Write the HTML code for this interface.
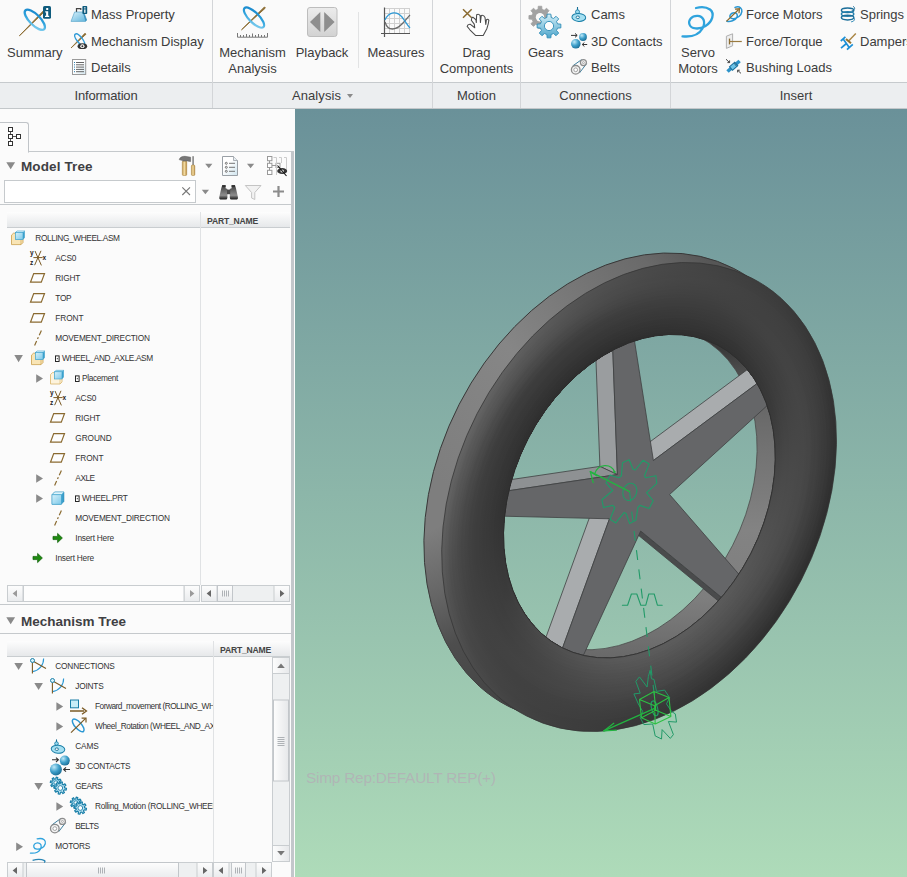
<!DOCTYPE html>
<html><head><meta charset="utf-8">
<style>
html,body{margin:0;padding:0;}
body{width:907px;height:877px;overflow:hidden;position:relative;background:#fafafa;font-family:"Liberation Sans",sans-serif;color:#3a3a3a;}
.abs{position:absolute;}
.t{position:absolute;white-space:nowrap;line-height:1;}
#ribbon{position:absolute;left:0;top:0;width:907px;height:82px;background:#fafafa;}
#rlabels{position:absolute;left:0;top:82px;width:907px;height:27px;background:#eceef0;border-top:1px solid #c6cacd;border-bottom:1px solid #c3c7ca;box-sizing:border-box;}
.rt{position:absolute;white-space:nowrap;font-size:13px;line-height:16px;color:#3c3c3c;}
.rl{position:absolute;white-space:nowrap;font-size:13px;line-height:16px;color:#3c3c3c;top:88px;text-align:center;}
.vsep{position:absolute;width:1px;background:#d2d4d6;}
#left{position:absolute;left:0;top:109px;width:295px;height:768px;background:#fbfbfb;}
.row{position:absolute;white-space:nowrap;font-size:8.3px;line-height:12px;color:#333;letter-spacing:-0.12px;}
.hd{position:absolute;white-space:nowrap;letter-spacing:0.12px;font-size:13.5px;font-weight:bold;color:#3f4043;line-height:16px;}
.col{position:absolute;white-space:nowrap;font-size:8.6px;font-weight:bold;color:#444;line-height:12px;letter-spacing:-0.2px;}
</style></head><body>

<!-- RIBBON -->
<div id="ribbon"></div>
<div id="rlabels"></div>
<!-- group separators -->
<div class="vsep" style="left:212px;top:0;height:108px;background:#d3d5d8"></div>
<div class="vsep" style="left:432px;top:0;height:108px;background:#d3d5d8"></div>
<div class="vsep" style="left:520px;top:0;height:108px;background:#d3d5d8"></div>
<div class="vsep" style="left:670px;top:0;height:108px;background:#d3d5d8"></div>
<div class="vsep" style="left:358px;top:12px;height:56px;background:#e2e3e4"></div>

<!-- big button labels -->
<div class="rt" style="left:7px;top:45px;">Summary</div>
<div class="rt" style="left:91px;top:7px;">Mass Property</div>
<div class="rt" style="left:91px;top:34px;">Mechanism Display</div>
<div class="rt" style="left:91px;top:60px;">Details</div>
<div class="rt" style="left:212px;top:45px;width:81px;text-align:center">Mechanism<br>Analysis</div>
<div class="rt" style="left:282px;top:45px;width:80px;text-align:center">Playback</div>
<div class="rt" style="left:356px;top:45px;width:80px;text-align:center">Measures</div>
<div class="rt" style="left:432px;top:45px;width:89px;text-align:center">Drag<br>Components</div>
<div class="rt" style="left:528px;top:45px;">Gears</div>
<div class="rt" style="left:591px;top:7px;">Cams</div>
<div class="rt" style="left:591px;top:34px;">3D Contacts</div>
<div class="rt" style="left:591px;top:60px;">Belts</div>
<div class="rt" style="left:668px;top:45px;width:60px;text-align:center">Servo<br>Motors</div>
<div class="rt" style="left:746px;top:7px;">Force Motors</div>
<div class="rt" style="left:746px;top:34px;">Force/Torque</div>
<div class="rt" style="left:746px;top:60px;">Bushing Loads</div>
<div class="rt" style="left:860px;top:7px;">Springs</div>
<div class="rt" style="left:860px;top:34px;">Dampers</div>

<!-- group labels -->
<div class="rl" style="left:0;width:212px;letter-spacing:-0.2px">Information</div>
<div class="rl" style="left:213px;width:219px;letter-spacing:0.1px">Analysis<span style="display:inline-block;width:0;height:0;border-left:3.6px solid transparent;border-right:3.6px solid transparent;border-top:4.4px solid #8a8a8a;margin-left:6px;position:relative;top:-2px"></span></div>
<div class="rl" style="left:432px;width:89px;">Motion</div>
<div class="rl" style="left:521px;width:149px;">Connections</div>
<div class="rl" style="left:671px;width:250px;">Insert</div>
<!--ICONS-START-->
<svg class="abs" style="left:0;top:0" width="907" height="82" viewBox="0 0 907 82">
<defs>
<linearGradient id="ring" x1="0" y1="0" x2="1" y2="1"><stop offset="0" stop-color="#1583c9"/><stop offset="0.5" stop-color="#2fa3dd"/><stop offset="1" stop-color="#8fd6f2"/></linearGradient>
<linearGradient id="gblue" x1="0" y1="0" x2="0" y2="1"><stop offset="0" stop-color="#d4eff8"/><stop offset="1" stop-color="#4fa6cb"/></linearGradient>
<radialGradient id="sph" cx="0.35" cy="0.3" r="0.8"><stop offset="0" stop-color="#bfe9f8"/><stop offset="0.5" stop-color="#3d9fca"/><stop offset="1" stop-color="#16658c"/></radialGradient>
<linearGradient id="pbk" x1="0" y1="0" x2="0" y2="1"><stop offset="0" stop-color="#ececec"/><stop offset="1" stop-color="#d2d2d2"/></linearGradient>
<linearGradient id="wgt" x1="0" y1="0" x2="1" y2="1"><stop offset="0" stop-color="#d8f0fa"/><stop offset="1" stop-color="#5fb4dc"/></linearGradient>
<linearGradient id="sheet" x1="0" y1="0" x2="1" y2="1"><stop offset="0.5" stop-color="#ffffff"/><stop offset="1" stop-color="#cfe4ee"/></linearGradient>
</defs>

<!-- Summary -->
<g>
<path d="M19.4 35.8 L44.6 9.6 L45.6 10.6 Z" fill="#8a6a2f" stroke="#8a6a2f" stroke-width="0.9" stroke-linejoin="round"/>
<ellipse cx="34.8" cy="19.8" rx="13.3" ry="5.3" transform="rotate(45 34.8 19.8)" fill="none" stroke="url(#ring)" stroke-width="2.3"/>
<path d="M30 24.6 L44.6 9.6 L45.6 10.6 Z" fill="#8a6a2f" stroke="#8a6a2f" stroke-width="0.9" stroke-linejoin="round" clip-path="none" opacity="0"/>
<rect x="43" y="6" width="8" height="12.8" rx="1.6" fill="#0f5b7d"/>
<rect x="46.2" y="8" width="2" height="2" fill="#fff"/><path d="M45.2 11.2h3v4.6h1v1.2h-4.2v-1.2h1.1v-3.4h-0.9z" fill="#fff"/>
</g>

<!-- Mass Property -->
<g>
<path d="M76.5 12 V8.6 H80.8 V10" fill="none" stroke="#444" stroke-width="1.2"/>
<path d="M74.6 12 L83.7 12 L86.7 20 L85.5 21.4 L71 21.4 Z" fill="url(#wgt)" stroke="#4a9cc4" stroke-width="0.6"/>
<path d="M83.7 12 L86.7 20 L85.5 21.4 L82.8 12.4Z" fill="#3f93bf"/>
<rect x="82.4" y="6" width="4.8" height="8" rx="0.8" fill="#0f5b7d"/>
<rect x="84.2" y="7.2" width="1.3" height="1.3" fill="#fff"/><rect x="84.2" y="9.4" width="1.3" height="3.4" fill="#fff"/>
</g>

<!-- Mechanism Display -->
<g>
<path d="M71 48 L85 33.2 L86 34.2 Z" fill="#8a6a2f" stroke="#8a6a2f" stroke-width="0.8" stroke-linejoin="round"/>
<ellipse cx="79.6" cy="39.6" rx="7" ry="2.7" transform="rotate(52 79.6 39.6)" fill="none" stroke="#2f9ad6" stroke-width="1.4"/>
<ellipse cx="82.4" cy="46.2" rx="4.8" ry="2.9" fill="#333"/>
<ellipse cx="82.4" cy="46.2" rx="2.1" ry="1.9" fill="#fff"/>
<circle cx="82.4" cy="46.2" r="1" fill="#333"/>
</g>

<!-- Details -->
<g>
<rect x="72.5" y="59.5" width="13.2" height="15" fill="url(#sheet)" stroke="#9a9a9a" stroke-width="1"/>
<g stroke="#555" stroke-width="0.9"><path d="M76 62.5H84M76 64.8H84M76 67.1H84M76 69.4H84M76 71.7H84"/></g>
<g fill="#2a7fb0"><rect x="74" y="62" width="1" height="1"/><rect x="74" y="64.3" width="1" height="1"/><rect x="74" y="66.6" width="1" height="1"/><rect x="74" y="68.9" width="1" height="1"/><rect x="74" y="71.2" width="1" height="1"/></g>
</g>

<!-- Mechanism Analysis -->
<g>
<path d="M241.5 29.8 L264.4 7 L265.4 8 Z" fill="#8a6a2f" stroke="#8a6a2f" stroke-width="0.9" stroke-linejoin="round"/>
<ellipse cx="254" cy="17.6" rx="13.4" ry="5" transform="rotate(45 254 17.6)" fill="none" stroke="url(#ring)" stroke-width="2.2"/>
<g stroke="#777" stroke-width="1" fill="none"><path d="M237.5 33V37.2H267.5V33M240.5 35V37M243.5 35V37M246.5 34V37M249.5 35V37M252.5 33.5V37M255.5 35V37M258.5 34V37M261.5 35V37M264.5 35V37"/></g>
</g>

<!-- Playback -->
<g>
<rect x="307.5" y="7.5" width="29.5" height="29" rx="2.5" fill="url(#pbk)" stroke="#bdbdbd"/>
<path d="M310 22 L320.3 12 V32Z" fill="#8e8e8e"/>
<path d="M334.6 22 L324.2 12 V32Z" fill="#8e8e8e"/>
</g>

<!-- Measures -->
<g>
<g stroke="#d0d0d0" stroke-width="1"><path d="M389.5 8V33M394.5 8V33M399.5 8V33M404.5 8V33M409.5 8V33M385 8.5H410M385 13.5H410M385 18.5H410M385 23.5H410M385 28.5H410"/></g>
<path d="M384.5 7.5V37M381 33.5H410" stroke="#555" stroke-width="1.2" fill="none"/>
<path d="M385 22 C388 32 396 30 402 24 C405 21 408 17 410 15" fill="none" stroke="#6a6a6a" stroke-width="1.3"/>
<path d="M385 20 C389 11 397 11 402 17 C405 21 407 25 410 28" fill="none" stroke="#2f9ad6" stroke-width="1.3"/>
</g>

<!-- Drag -->
<g>
<path d="M463 9.2L471.7 17.7M471.7 9.2L463 17.7" stroke="#8a6a2f" stroke-width="1.5" fill="none"/>
<path d="M471.93 17.44 L471.32 20.27 L474.24 24.11 L474.75 27.71 L470.39 24.37 Q467.57 24.11 467.16 26.42 L469.88 29.76 L475.52 35.40 L483.22 35.40 L486.81 28.73 Q488.61 23.60 488.86 20.27 Q488.09 18.73 486.40 19.75 L485.79 24.37 L485.02 17.44 Q483.73 14.62 481.27 15.39 L480.40 22.58 L480.14 15.65 Q478.60 13.44 476.65 14.78 L476.29 22.58 L475.93 19.75 L472.86 17.19 Z" fill="#fff" stroke="#4a4a4a" stroke-width="1.05" stroke-linejoin="round"/>
</g>

<!-- Gears -->
<g>
<path d="M547.96 15.32 L551.06 15.55 L551.06 19.05 L547.96 19.28 L547.03 21.53 L549.06 23.88 L546.58 26.36 L544.23 24.33 L541.98 25.26 L541.75 28.36 L538.25 28.36 L538.02 25.26 L535.77 24.33 L533.42 26.36 L530.94 23.88 L532.97 21.53 L532.04 19.28 L528.94 19.05 L528.94 15.55 L532.04 15.32 L532.97 13.07 L530.94 10.72 L533.42 8.24 L535.77 10.27 L538.02 9.34 L538.25 6.24 L541.75 6.24 L541.98 9.34 L544.23 10.27 L546.58 8.24 L549.06 10.72 L547.03 13.07Z" fill="#a2a2a2" stroke="#a2a2a2" stroke-width="0.8" stroke-linejoin="round"/>
<circle cx="540" cy="17.3" r="4.2" fill="#fafafa"/>
<path d="M557.54 23.88 L560.85 24.12 L560.85 27.88 L557.54 28.12 L556.54 30.54 L558.71 33.05 L556.05 35.71 L553.54 33.54 L551.12 34.54 L550.88 37.85 L547.12 37.85 L546.88 34.54 L544.46 33.54 L541.95 35.71 L539.29 33.05 L541.46 30.54 L540.46 28.12 L537.15 27.88 L537.15 24.12 L540.46 23.88 L541.46 21.46 L539.29 18.95 L541.95 16.29 L544.46 18.46 L546.88 17.46 L547.12 14.15 L550.88 14.15 L551.12 17.46 L553.54 18.46 L556.05 16.29 L558.71 18.95 L556.54 21.46Z" fill="url(#gblue)" stroke="#2f8db8" stroke-width="0.9" stroke-linejoin="round"/>
<circle cx="549" cy="26" r="4.6" fill="#fdfdfd" stroke="#2f8db8" stroke-width="0.9"/>
</g>

<!-- Cams -->
<g>
<path d="M577.5 7V11" stroke="#1a6f95" stroke-width="1.1"/>
<circle cx="577.5" cy="11.8" r="2" fill="#9ddcf0" stroke="#1a7fa8" stroke-width="0.9"/>
<ellipse cx="578.8" cy="17.4" rx="6.9" ry="4" transform="rotate(4 578.8 17.4)" fill="#a5e0f2" stroke="#1a7fa8" stroke-width="1"/>
<ellipse cx="577.8" cy="17.3" rx="1.7" ry="1.3" fill="#fafafa" stroke="#1a6f95" stroke-width="0.9"/>
</g>

<!-- 3D Contacts -->
<g>
<circle cx="583" cy="37" r="3.9" fill="url(#sph)"/>
<circle cx="575.8" cy="43.8" r="4.8" fill="url(#sph)"/>
<path d="M571 35.4H577M575 33.4L577.2 35.4L575 37.4" stroke="#333" stroke-width="1" fill="none"/>
<path d="M587.2 44.5H582.4M584.4 42.5L582.2 44.5L584.4 46.5" stroke="#333" stroke-width="1" fill="none"/>
</g>

<!-- Belts -->
<g>
<path d="M572.6 66 L581.6 59.6 M579.4 73 L586.6 63.6" stroke="#3d7f9f" stroke-width="1" fill="none"/>
<circle cx="575.7" cy="69.8" r="4.3" fill="#f4f4f4" stroke="#8c8c8c" stroke-width="1.3"/>
<circle cx="575.7" cy="69.8" r="1.9" fill="#fff" stroke="#9a9a9a" stroke-width="0.9"/>
<circle cx="583.4" cy="62.6" r="3" fill="#f4f4f4" stroke="#8c8c8c" stroke-width="1.2"/>
<circle cx="583.4" cy="62.6" r="1" fill="#fff" stroke="#9a9a9a" stroke-width="0.8"/>
</g>
<!--MORE-ICONS-->
<!-- Servo -->
<g fill="none" stroke="#2fa3dd" stroke-width="2.3" stroke-linecap="round">
<path d="M682.5 36.3 C691 37.2 698.5 35.5 702.5 28.5 C706 22 703.5 16 697.5 15.8 C691.5 15.6 688 20 689.5 24.5 C691 29 699 30 705.5 26 C712.5 21.5 715 13.5 710 9.5 C706.5 7 700.5 6.8 696 8" />
</g>

<!-- Force Motors -->
<g fill="none">
<path d="M727 21.3 C730.5 22 735 20.5 736.8 17.5 C738.2 15 736.8 12.6 734 12.8 C731 13 729 15.5 730.2 17.4 C731.5 19.5 736 19 739 16.5 C742.5 13.5 742.6 9.5 740.5 7.8 C739 6.6 736.5 6.8 735 7.4" stroke="#2a97d3" stroke-width="1.5" stroke-linecap="round"/>
<path d="M726.4 21.4 L738.4 9.8" stroke="#8a6a2f" stroke-width="1.3"/>
<path d="M735 9.2 L739.4 8.8 L739 13.2" stroke="#8a6a2f" stroke-width="1.3" stroke-linejoin="miter"/>
</g>

<!-- Force/Torque -->
<g>
<path d="M726.4 36.2 L732.6 33.8 L732.6 45.8 L726.4 48.4 Z" fill="#ededed" stroke="#a8a8a8" stroke-width="0.9"/>
<path d="M729.5 38.6V44.4" stroke="#8a6a2f" stroke-width="1.3"/>
<path d="M729.5 41.5 H741.8" stroke="#9a7a3f" stroke-width="1.2"/>
</g>

<!-- Bushing Loads -->
<g>
<path d="M727.5 71.5 L739.6 61" stroke="#2d93c9" stroke-width="3.6" stroke-linecap="butt"/>
<path d="M730.6 68.8 L736.6 63.6" stroke="#1b6f9c" stroke-width="5.6"/>
<path d="M731.4 68.1 L735.8 64.3" stroke="#6cc3e8" stroke-width="3.6"/>
<path d="M734.2 63.2 L736.4 66.2" stroke="#1d4f68" stroke-width="0.8"/>
<path d="M726 59.2 L729.4 62.4 M727.4 62.6 H729.6 V60.4" stroke="#333" stroke-width="0.9" fill="none"/>
<path d="M741 73.4 L737.8 70.4 M739.8 70.2 H737.6 V72.4" stroke="#333" stroke-width="0.9" fill="none"/>
</g>

<!-- Springs -->
<g fill="none" stroke-linecap="round">
<path d="M853.5 6.5 C855.5 8 855 10 852 10.8" stroke="#1d6f9a" stroke-width="1"/>
<ellipse cx="847.6" cy="10.3" rx="6.2" ry="2.3" stroke="#1d6f9a" stroke-width="1.5"/>
<ellipse cx="847.6" cy="14" rx="6.2" ry="2.3" stroke="#2580ad" stroke-width="1.5"/>
<ellipse cx="847.6" cy="17.6" rx="6.2" ry="2.3" stroke="#1d6f9a" stroke-width="1.5"/>
<path d="M854 18 C855.5 19.5 854 21.5 851.5 21.8" stroke="#2d88b5" stroke-width="1"/>
</g>

<!-- Dampers -->
<g fill="none">
<path d="M845.4 36.8 L840.8 41 M843.2 38.9 L849.2 47.4 M846.4 43.5 L841 48.2 M847 49.6 L852.8 44.4 M849.2 47.4 L847 49.6" stroke="#1b8fd6" stroke-width="1.7"/>
<path d="M855.8 33.4 L848.6 41" stroke="#a98544" stroke-width="1.4"/>
<path d="M846 39 L851 43.2" stroke="#94722f" stroke-width="2"/>
</g>
</svg>


<!-- LEFT PANEL -->
<div id="left"></div>
<div class="abs" style="left:0;top:151px;width:294px;height:1px;background:#c5c9cc"></div>
<div class="abs" style="left:-1px;top:122px;width:28px;height:29px;border:1px solid #c0c4c8;border-bottom:1px solid #fbfbfb;border-radius:0 3px 0 0;background:#fbfbfb;box-sizing:content-box"></div>
<div class="abs" style="left:291px;top:152px;width:3px;height:725px;background:#c3c7cb"></div>
<svg class="abs" style="left:0;top:120px" width="30" height="32" viewBox="0 120 30 32"><g fill="#fff" stroke="#333" stroke-width="1"><path d="M10.5 131.5V134.5M10.5 138.5V141.5M12.5 136.5H16.5" fill="none" stroke="#555"/><rect x="8.5" y="127.5" width="4" height="4"/><rect x="8.5" y="134.5" width="4" height="4"/><rect x="8.5" y="141.5" width="4" height="4"/><rect x="16.5" y="134.5" width="4" height="4"/></g></svg>
<div class="hd" style="left:21px;top:158.6px;">Model Tree</div>
<div class="hd" style="left:21px;top:613.6px;letter-spacing:0">Mechanism Tree</div>
<div class="abs" style="left:0;top:204px;width:291px;height:1px;background:#c5c9cc"></div>
<div class="abs" style="left:0;top:604px;width:291px;height:1px;background:#c5c9cc"></div>
<div class="abs" style="left:0;top:633px;width:291px;height:1px;background:#c5c9cc"></div>
<div class="abs" style="left:4px;top:180px;width:192px;height:23px;border:1px solid #c6cacd;background:#fff;box-sizing:border-box"></div>
<div class="abs" style="left:7px;top:212px;width:283px;height:16px;background:linear-gradient(#fdfdfd,#e6e8ea);border-bottom:1px solid #c9cdd0;box-sizing:border-box"></div>
<div class="abs" style="left:200px;top:212px;width:1px;height:373px;background:#e0e2e4"></div>
<div class="col" style="left:207px;top:215px;">PART_NAME</div>
<div class="abs" style="left:7px;top:641px;width:283px;height:16px;background:linear-gradient(#fdfdfd,#e6e8ea);border-bottom:1px solid #c9cdd0;box-sizing:border-box"></div>
<div class="abs" style="left:213px;top:641px;width:1px;height:221px;background:#e0e2e4"></div>
<div class="col" style="left:220px;top:644px;">PART_NAME</div>
<div class="row" style="left:35.3px;top:232.0px;letter-spacing:-0.385px;">ROLLING_WHEEL.ASM</div>
<div class="row" style="left:55.3px;top:252.0px;letter-spacing:-0.222px;">ACS0</div>
<div class="row" style="left:55.3px;top:272.0px;letter-spacing:-0.202px;">RIGHT</div>
<div class="row" style="left:55.3px;top:292.0px;letter-spacing:-0.335px;">TOP</div>
<div class="row" style="left:55.3px;top:312.0px;letter-spacing:-0.096px;">FRONT</div>
<div class="row" style="left:55.3px;top:332.0px;letter-spacing:-0.210px;">MOVEMENT_DIRECTION</div>
<div class="row" style="left:62.1px;top:352.0px;letter-spacing:-0.398px;">WHEEL_AND_AXLE.ASM</div>
<div class="row" style="left:82.1px;top:372.0px;letter-spacing:-0.389px;">Placement</div>
<div class="row" style="left:75.3px;top:392.0px;letter-spacing:-0.222px;">ACS0</div>
<div class="row" style="left:75.3px;top:412.0px;letter-spacing:-0.202px;">RIGHT</div>
<div class="row" style="left:75.3px;top:432.0px;letter-spacing:-0.096px;">GROUND</div>
<div class="row" style="left:75.3px;top:452.0px;letter-spacing:-0.096px;">FRONT</div>
<div class="row" style="left:75.3px;top:472.0px;letter-spacing:-0.455px;">AXLE</div>
<div class="row" style="left:82.1px;top:492.0px;letter-spacing:-0.330px;">WHEEL.PRT</div>
<div class="row" style="left:75.3px;top:512.0px;letter-spacing:-0.210px;">MOVEMENT_DIRECTION</div>
<div class="row" style="left:75.3px;top:532.0px;letter-spacing:-0.222px;">Insert Here</div>
<div class="row" style="left:55.3px;top:552.0px;letter-spacing:-0.222px;">Insert Here</div>
<div class="row" style="left:55.2px;top:660.0px;letter-spacing:-0.165px;">CONNECTIONS</div>
<div class="row" style="left:75.2px;top:680.0px;letter-spacing:-0.186px;">JOINTS</div>
<div class="row" style="left:95.0px;top:700.0px;letter-spacing:-0.511px;width:117.5px;overflow:hidden;">Forward_movement (ROLLING_WHEEL</div>
<div class="row" style="left:95.0px;top:720.0px;letter-spacing:-0.415px;width:117.5px;overflow:hidden;">Wheel_Rotation (WHEEL_AND_AXLE</div>
<div class="row" style="left:75.2px;top:740.0px;letter-spacing:-0.146px;">CAMS</div>
<div class="row" style="left:75.2px;top:760.0px;letter-spacing:-0.249px;">3D CONTACTS</div>
<div class="row" style="left:75.2px;top:780.0px;letter-spacing:-0.332px;">GEARS</div>
<div class="row" style="left:95.0px;top:800.0px;letter-spacing:-0.296px;width:117.5px;overflow:hidden;">Rolling_Motion (ROLLING_WHEEL</div>
<div class="row" style="left:75.2px;top:820.0px;letter-spacing:-0.454px;">BELTS</div>
<div class="row" style="left:55.2px;top:840.0px;letter-spacing:-0.211px;">MOTORS</div>
<svg class="abs" style="left:0;top:109px" width="295" height="768" viewBox="0 109 295 768">
<defs>
<linearGradient id="lblue" x1="0" y1="0" x2="1" y2="1"><stop offset="0" stop-color="#d6f1fb"/><stop offset="1" stop-color="#7cc8e8"/></linearGradient>
<linearGradient id="ham" x1="0" y1="0" x2="1" y2="0"><stop offset="0" stop-color="#c9a25a"/><stop offset="0.5" stop-color="#f0d9a0"/><stop offset="1" stop-color="#b8883a"/></linearGradient>
<linearGradient id="sheetL" x1="0" y1="0" x2="1" y2="1"><stop offset="0.4" stop-color="#ffffff"/><stop offset="1" stop-color="#cfe4ee"/></linearGradient>
<linearGradient id="sbt" x1="0" y1="0" x2="0" y2="1"><stop offset="0" stop-color="#fdfdfd"/><stop offset="1" stop-color="#e9ebed"/></linearGradient>
<linearGradient id="sbtv" x1="0" y1="0" x2="1" y2="0"><stop offset="0" stop-color="#fdfdfd"/><stop offset="1" stop-color="#e6e8ea"/></linearGradient>
<radialGradient id="sph2" cx="0.35" cy="0.3" r="0.8"><stop offset="0" stop-color="#bfe9f8"/><stop offset="0.5" stop-color="#3d9fca"/><stop offset="1" stop-color="#16658c"/></radialGradient>
<linearGradient id="bino" x1="0" y1="0" x2="0" y2="1"><stop offset="0" stop-color="#3a3a3a"/><stop offset="0.35" stop-color="#666"/><stop offset="0.7" stop-color="#8e8e8e"/><stop offset="0.88" stop-color="#444"/><stop offset="1" stop-color="#1a1a1a"/></linearGradient>
</defs>
<path d="M6.3 162.3 h8.8 l-4.4 7.0z" fill="#8a8a8a"/>
<path d="M6.3 617.2 h8.8 l-4.4 7.0z" fill="#8a8a8a"/>
<g>
<rect x="182.3" y="161" width="4.4" height="14.5" rx="1" fill="url(#ham)" stroke="#a07a30" stroke-width="0.5"/>
<path d="M179.2 159.6 C180 156.8 183 156 186 156.4 L190.6 157.2 V161.6 L187.4 161 H183 C181.5 160 180.2 160.2 179.2 159.6Z" fill="#777" stroke="#555" stroke-width="0.5"/>
<rect x="192.3" y="156.2" width="1.6" height="9" fill="#888"/>
<rect x="191.4" y="165" width="3.4" height="10.5" rx="1" fill="url(#ham)" stroke="#a07a30" stroke-width="0.5"/>
</g>
<path d="M205.2 163.8 h7.2 l-3.6 4.4z" fill="#8a8a8a"/>
<g>
<path d="M222.5 156.5 H233.5 L237.5 160.5 V175.5 H222.5Z" fill="url(#sheetL)" stroke="#9aa0a6" stroke-width="1"/>
<path d="M233.5 156.5 V160.5 H237.5" fill="#e8eef2" stroke="#9aa0a6" stroke-width="0.8"/>
<g stroke="#666" stroke-width="0.9" fill="none"><circle cx="226.3" cy="163.3" r="1"/><circle cx="226.3" cy="167.3" r="1"/><circle cx="226.3" cy="171.3" r="1"/><path d="M229 163.3H235M229 167.3H235M229 171.3H235"/></g>
</g>
<path d="M247.0 163.8 h7.2 l-3.6 4.4z" fill="#8a8a8a"/>
<g>
<g fill="#fff" stroke="#999" stroke-width="1"><path d="M269.5 161V175M272 165.5H276" fill="none"/><rect x="267.5" y="156.5" width="4.4" height="4.2"/><rect x="267.5" y="163.3" width="4.4" height="4.2"/><rect x="267.5" y="170.3" width="4.4" height="4.2"/><rect x="276" y="163.3" width="4" height="4.2"/></g>
<path d="M273.5 157.5H276.5V175M279 157.5H281.5V163M284 157.5H286.5V170" fill="none" stroke="#ccc" stroke-width="1"/>
<ellipse cx="282.2" cy="171" rx="5" ry="3" fill="#333"/><ellipse cx="282.2" cy="171" rx="1.8" ry="1.6" fill="#ddd"/>
<path d="M277.5 165.5L286.5 176" stroke="#111" stroke-width="1.1"/>
</g>
<path d="M182.3 187.3L190 195M190 187.3L182.3 195" stroke="#777" stroke-width="1.1"/>
<path d="M201.8 189.8 h7.2 l-3.6 4.4z" fill="#8a8a8a"/>
<g>
<path d="M222.2 185.3 H225.6 V188.2 L227.4 189 V197.4 Q227.4 199.6 225.6 199.6 H221.4 Q218.8 199.6 219.3 197 L221.2 188.4 Z" fill="url(#bino)"/>
<path d="M235 185.3 H231.6 V188.2 L229.8 189 V197.4 Q229.8 199.6 231.6 199.6 H235.8 Q238.4 199.6 237.9 197 L236 188.4 Z" fill="url(#bino)"/>
<rect x="227" y="189.6" width="3.2" height="4.6" fill="#4a4a4a"/>
<path d="M222.2 185.3h3.4v1.5h-3.4zM231.6 185.3h3.4v1.5h-3.4z" fill="#2a2a2a"/>
</g>
<path d="M245.3 185.5H261 L254.8 192.5 V199.5 L251.6 198 V192.5Z" fill="#f2f2f2" stroke="#c4c4c4" stroke-width="1" stroke-linejoin="round"/>
<path d="M278.5 186V197M273 191.5H284" stroke="#8c8c8c" stroke-width="2.2"/>
<g transform="translate(11 230.6)">
<path d="M0.5 4.5 L2.5 2.6 H12 V12 L10 14 H0.5Z" fill="#f9e5b5" stroke="#c9a04c" stroke-width="0.8"/>
<path d="M10 14V4.5" stroke="#c9a04c" stroke-width="0.6" fill="none"/>
<path d="M4.5 1.8 L6.3 0.3 H13.8 V7.2 L12 9 H4.5Z" fill="#3ba0cc"/>
<path d="M4.5 1.8 L6.3 0.3 H13.8 L12 1.8Z" fill="#d8f2fb" stroke="#3ba0cc" stroke-width="0.5"/>
<rect x="4.5" y="1.8" width="7.5" height="7.2" fill="url(#lblue)" stroke="#3ba0cc" stroke-width="0.6"/>
</g>
<g transform="translate(30 250)">
<path d="M5 1 L11.4 15.4 M11 0.8 L4.6 15.2 M3.4 7.6 H12.6" stroke="#7a5a25" stroke-width="1" fill="none"/>
<g font-family="Liberation Sans,sans-serif" font-size="6.5" font-weight="bold" fill="#222"><text x="0" y="5.2">y</text><text x="12.6" y="9.6">x</text><text x="0" y="15">z</text></g>
</g>
<path d="M33.7 273.6 H44.5 L41.3 282.20000000000005 H30.5Z" fill="#fdfdfd" stroke="#8a6a30" stroke-width="1.2" stroke-linejoin="miter"/>
<path d="M33.7 293.6 H44.5 L41.3 302.20000000000005 H30.5Z" fill="#fdfdfd" stroke="#8a6a30" stroke-width="1.2" stroke-linejoin="miter"/>
<path d="M33.7 313.6 H44.5 L41.3 322.20000000000005 H30.5Z" fill="#fdfdfd" stroke="#8a6a30" stroke-width="1.2" stroke-linejoin="miter"/>
<path d="M41.4 330.5 L34.6 345.5" stroke="#8a6a30" stroke-width="1.2" stroke-dasharray="5.2 2.2 2 2.2" fill="none"/>
<g transform="translate(31 350.6)">
<path d="M0.5 4.5 L2.5 2.6 H12 V12 L10 14 H0.5Z" fill="#f9e5b5" stroke="#c9a04c" stroke-width="0.8"/>
<path d="M10 14V4.5" stroke="#c9a04c" stroke-width="0.6" fill="none"/>
<path d="M4.5 1.8 L6.3 0.3 H13.8 V7.2 L12 9 H4.5Z" fill="#3ba0cc"/>
<path d="M4.5 1.8 L6.3 0.3 H13.8 L12 1.8Z" fill="#d8f2fb" stroke="#3ba0cc" stroke-width="0.5"/>
<rect x="4.5" y="1.8" width="7.5" height="7.2" fill="url(#lblue)" stroke="#3ba0cc" stroke-width="0.6"/>
</g>
<rect x="55.5" y="355.90000000000003" width="3.6" height="5.6" fill="#fff" stroke="#111" stroke-width="0.9"/><rect x="56.8" y="358.20000000000005" width="1" height="1" fill="#111"/>
<g transform="translate(50 370)">
<path d="M0.5 4.5 L2.5 2.6 H12 V12 L10 14 H0.5Z" fill="#fdf3dc" stroke="#d9b56a" stroke-width="0.8"/>
<path d="M10 14V4.5" stroke="#d9b56a" stroke-width="0.6" fill="none"/>
<path d="M4.5 1.8 L6.3 0.3 H13.8 V7.2 L12 9 H4.5Z" fill="#3ba0cc"/>
<path d="M4.5 1.8 L6.3 0.3 H13.8 L12 1.8Z" fill="#d8f2fb" stroke="#3ba0cc" stroke-width="0.5"/>
<rect x="4.5" y="1.8" width="7.5" height="7.2" fill="url(#lblue)" stroke="#3ba0cc" stroke-width="0.6"/>
</g>
<rect x="75.5" y="375.90000000000003" width="3.6" height="5.6" fill="#fff" stroke="#111" stroke-width="0.9"/><rect x="76.8" y="378.20000000000005" width="1" height="1" fill="#111"/>
<g transform="translate(50 390)">
<path d="M5 1 L11.4 15.4 M11 0.8 L4.6 15.2 M3.4 7.6 H12.6" stroke="#7a5a25" stroke-width="1" fill="none"/>
<g font-family="Liberation Sans,sans-serif" font-size="6.5" font-weight="bold" fill="#222"><text x="0" y="5.2">y</text><text x="12.6" y="9.6">x</text><text x="0" y="15">z</text></g>
</g>
<path d="M53.7 413.6 H64.5 L61.3 422.20000000000005 H50.5Z" fill="#fdfdfd" stroke="#8a6a30" stroke-width="1.2" stroke-linejoin="miter"/>
<path d="M53.7 433.6 H64.5 L61.3 442.20000000000005 H50.5Z" fill="#fdfdfd" stroke="#8a6a30" stroke-width="1.2" stroke-linejoin="miter"/>
<path d="M53.7 453.6 H64.5 L61.3 462.20000000000005 H50.5Z" fill="#fdfdfd" stroke="#8a6a30" stroke-width="1.2" stroke-linejoin="miter"/>
<path d="M61.4 470.5 L54.6 485.5" stroke="#8a6a30" stroke-width="1.2" stroke-dasharray="5.2 2.2 2 2.2" fill="none"/>
<g transform="translate(51 491)">
<path d="M1 3.8 L3.6 1 H13 V10.4 L10.4 13.2 H1Z" fill="#3ba0cc" stroke="#2a86b0" stroke-width="0.5"/>
<path d="M1 3.8 L3.6 1 H13 L10.4 3.8Z" fill="#dff4fb" stroke="#3ba0cc" stroke-width="0.5"/>
<rect x="1" y="3.8" width="9.4" height="9.4" fill="url(#lblue)" stroke="#3ba0cc" stroke-width="0.6"/>
</g>
<rect x="75.5" y="495.90000000000003" width="3.6" height="5.6" fill="#fff" stroke="#111" stroke-width="0.9"/><rect x="76.8" y="498.20000000000005" width="1" height="1" fill="#111"/>
<path d="M61.4 510.5 L54.6 525.5" stroke="#8a6a30" stroke-width="1.2" stroke-dasharray="5.2 2.2 2 2.2" fill="none"/>
<path d="M53 536.4 H57.6 V533.4 L62.4 538 L57.6 542.6 V539.6 H53Z" fill="#1e8a10" stroke="#0d5c06" stroke-width="0.7" stroke-linejoin="round"/>
<path d="M33 556.4 H37.6 V553.4 L42.4 558 L37.6 562.6 V559.6 H33Z" fill="#1e8a10" stroke="#0d5c06" stroke-width="0.7" stroke-linejoin="round"/>
<path d="M14.3 355.0 h8.6 l-4.3 7.2z" fill="#8a8a8a"/>
<path d="M36.2 374.2 v8.6 l6.8 -4.3z" fill="#8a8a8a"/>
<path d="M36.2 474.2 v8.6 l6.8 -4.3z" fill="#8a8a8a"/>
<path d="M36.2 494.2 v8.6 l6.8 -4.3z" fill="#8a8a8a"/>
<rect x="7.5" y="585.5" width="192" height="16" fill="#eef0f1" stroke="#c9cdd0" stroke-width="1"/><rect x="7.5" y="585.5" width="15.5" height="16" fill="url(#sbt)" stroke="#c9cdd0"/><rect x="184" y="585.5" width="15.5" height="16" fill="url(#sbt)" stroke="#c9cdd0"/><path d="M17 589.9 V597.1 L12.6 593.5Z" fill="#9a9a9a"/><path d="M190 589.9 V597.1 L194.4 593.5Z" fill="#9a9a9a"/>
<rect x="23.5" y="585.5" width="160.5" height="16" fill="#fdfdfd" stroke="#c9cdd0"/>
<rect x="201.5" y="585.5" width="88" height="16" fill="#eef0f1" stroke="#c9cdd0" stroke-width="1"/><rect x="201.5" y="585.5" width="15.5" height="16" fill="url(#sbt)" stroke="#c9cdd0"/><rect x="274" y="585.5" width="15.5" height="16" fill="url(#sbt)" stroke="#c9cdd0"/><path d="M211 589.9 V597.1 L206.6 593.5Z" fill="#666"/><path d="M280 589.9 V597.1 L284.4 593.5Z" fill="#666"/><rect x="217.5" y="585.5" width="15" height="16" fill="url(#sbt)" stroke="#c2c6ca"/><path d="M222.5 590.5v6M224.5 590.5v6M226.5 590.5v6M228.5 590.5v6" stroke="#aeb2b6" stroke-width="1"/>
<rect x="7.5" y="862.5" width="205" height="16" fill="#eef0f1" stroke="#c9cdd0" stroke-width="1"/><rect x="7.5" y="862.5" width="15.5" height="16" fill="url(#sbt)" stroke="#c9cdd0"/><rect x="197" y="862.5" width="15.5" height="16" fill="url(#sbt)" stroke="#c9cdd0"/><path d="M17 866.9 V874.1 L12.6 870.5Z" fill="#666"/><path d="M203 866.9 V874.1 L207.4 870.5Z" fill="#666"/><rect x="26.5" y="862.5" width="152" height="16" fill="url(#sbt)" stroke="#c2c6ca"/><path d="M98.5 867.5v6M100.5 867.5v6M102.5 867.5v6M104.5 867.5v6" stroke="#aeb2b6" stroke-width="1"/>
<rect x="213.5" y="862.5" width="58" height="16" fill="#eef0f1" stroke="#c9cdd0" stroke-width="1"/><rect x="213.5" y="862.5" width="15.5" height="16" fill="url(#sbt)" stroke="#c9cdd0"/><rect x="256" y="862.5" width="15.5" height="16" fill="url(#sbt)" stroke="#c9cdd0"/><path d="M223 866.9 V874.1 L218.6 870.5Z" fill="#666"/><path d="M262 866.9 V874.1 L266.4 870.5Z" fill="#666"/><rect x="231.5" y="862.5" width="14" height="16" fill="url(#sbt)" stroke="#c2c6ca"/><path d="M235.5 867.5v6M237.5 867.5v6M239.5 867.5v6M241.5 867.5v6" stroke="#aeb2b6" stroke-width="1"/>
<rect x="272.5" y="657.5" width="17" height="204" fill="#eef0f1" stroke="#c9cdd0"/>
<rect x="272.5" y="657.5" width="17" height="16" fill="url(#sbtv)" stroke="#c9cdd0"/>
<rect x="272.5" y="845.5" width="17" height="16" fill="url(#sbtv)" stroke="#c9cdd0"/>
<path d="M277.2 668 H284.8 L281 663.4Z" fill="#777"/>
<path d="M277.2 851 H284.8 L281 855.6Z" fill="#777"/>
<rect x="273.5" y="700" width="15" height="81" fill="url(#sbtv)" stroke="#c2c6ca"/>
<path d="M277.5 737.5h7M277.5 739.5h7M277.5 741.5h7M277.5 743.5h7M277.5 745.5h7" stroke="#aeb2b6" stroke-width="1"/>
<g transform="translate(30 658)" fill="none">
<path d="M13.6 0.4 C13.8 7 9 12.6 2.6 13.6" stroke="#2a97d3" stroke-width="1.1"/>
<path d="M2.4 4.4 V15.6 M3.6 3.4 L16 10.4" stroke="#7a5a25" stroke-width="1.1"/>
<circle cx="2.5" cy="2.5" r="2" fill="#d8f2fb" stroke="#1a7fa8" stroke-width="1"/>
</g>
<g transform="translate(50 678)" fill="none">
<path d="M13.6 0.4 C13.8 7 9 12.6 2.6 13.6" stroke="#2a97d3" stroke-width="1.1"/>
<path d="M2.4 4.4 V15.6 M3.6 3.4 L16 10.4" stroke="#7a5a25" stroke-width="1.1"/>
<circle cx="2.5" cy="2.5" r="2" fill="#d8f2fb" stroke="#1a7fa8" stroke-width="1"/>
</g>
<path d="M14.3 662.9 h8.6 l-4.3 7.2z" fill="#8a8a8a"/>
<path d="M34.3 682.9 h8.6 l-4.3 7.2z" fill="#8a8a8a"/>
<path d="M34.3 782.9 h8.6 l-4.3 7.2z" fill="#8a8a8a"/>
<path d="M56.4 702.2 v8.6 l6.8 -4.3z" fill="#8a8a8a"/>
<path d="M56.4 722.2 v8.6 l6.8 -4.3z" fill="#8a8a8a"/>
<path d="M56.4 802.2 v8.6 l6.8 -4.3z" fill="#8a8a8a"/>
<path d="M16.2 842.5 v8.6 l6.8 -4.3z" fill="#8a8a8a"/>
<rect x="70.5" y="700" width="8" height="7.8" fill="#c8eef8" stroke="#1a7fa8" stroke-width="1"/><path d="M70 711 H84" stroke="#7a5a25" stroke-width="1.5"/><path d="M82 707.8 L86.4 711 L82 714.2" stroke="#7a5a25" stroke-width="1.4" fill="none"/>
<ellipse cx="78.2" cy="725.4" rx="8" ry="3.3" transform="rotate(48 78.2 725.4)" fill="none" stroke="#2a97d3" stroke-width="1.5"/><path d="M71 732.6 L85.6 718.4" stroke="#7a5a25" stroke-width="1.2"/><path d="M81.6 718.2 H86 V722.6" stroke="#7a5a25" stroke-width="1.2" fill="none"/>
<g><path d="M56.5 739.4V743" stroke="#1a6f95" stroke-width="1.1"/><circle cx="56.5" cy="743.6" r="1.8" fill="#9ddcf0" stroke="#1a7fa8" stroke-width="0.9"/>
<ellipse cx="58" cy="749.2" rx="6.8" ry="4" transform="rotate(5 58 749.2)" fill="#a5e0f2" stroke="#1a7fa8" stroke-width="1"/><ellipse cx="56.8" cy="749.2" rx="1.7" ry="1.3" fill="#fafafa" stroke="#1a6f95" stroke-width="0.9"/></g>
<g><circle cx="64.8" cy="760.6" r="5" fill="url(#sph2)"/><circle cx="55.9" cy="769.5" r="6" fill="url(#sph2)"/>
<path d="M52 759.8H58M56 757.6L58.4 759.8L56 762" stroke="#333" stroke-width="1.1" fill="none"/><path d="M70 769.5H64M66 767.3L63.6 769.5L66 771.7" stroke="#333" stroke-width="1.1" fill="none"/></g>
<g><path d="M59.70 782.69 L61.49 783.08 L61.16 784.72 L59.36 784.38 L58.66 785.41 L59.65 786.96 L58.27 787.88 L57.23 786.36 L56.01 786.60 L55.62 788.39 L53.98 788.06 L54.32 786.26 L53.29 785.56 L51.74 786.55 L50.82 785.17 L52.34 784.13 L52.10 782.91 L50.31 782.52 L50.64 780.88 L52.44 781.22 L53.14 780.19 L52.15 778.64 L53.53 777.72 L54.57 779.24 L55.79 779.00 L56.18 777.21 L57.82 777.54 L57.48 779.34 L58.51 780.04 L60.06 779.05 L60.98 780.43 L59.46 781.47Z" fill="#a9dcf0" stroke="#1a7fa8" stroke-width="1.2" stroke-linejoin="round"/><circle cx="55.9" cy="782.8" r="2" fill="#fff" stroke="#1a7fa8" stroke-width="0.9"/>
<path d="M64.60 787.88 L66.49 788.31 L66.13 790.12 L64.21 789.78 L63.42 790.95 L64.46 792.60 L62.92 793.62 L61.81 792.03 L60.42 792.30 L59.99 794.19 L58.18 793.83 L58.52 791.91 L57.35 791.12 L55.70 792.16 L54.68 790.62 L56.27 789.51 L56.00 788.12 L54.11 787.69 L54.47 785.88 L56.39 786.22 L57.18 785.05 L56.14 783.40 L57.68 782.38 L58.79 783.97 L60.18 783.70 L60.61 781.81 L62.42 782.17 L62.08 784.09 L63.25 784.88 L64.90 783.84 L65.92 785.38 L64.33 786.49Z" fill="#c4e8f6" stroke="#1a7fa8" stroke-width="1.2" stroke-linejoin="round"/><circle cx="60.3" cy="788.0" r="2.4" fill="#fff" stroke="#1a7fa8" stroke-width="0.9"/></g>
<g><path d="M79.70 802.69 L81.49 803.08 L81.16 804.72 L79.36 804.38 L78.66 805.41 L79.65 806.96 L78.27 807.88 L77.23 806.36 L76.01 806.60 L75.62 808.39 L73.98 808.06 L74.32 806.26 L73.29 805.56 L71.74 806.55 L70.82 805.17 L72.34 804.13 L72.10 802.91 L70.31 802.52 L70.64 800.88 L72.44 801.22 L73.14 800.19 L72.15 798.64 L73.53 797.72 L74.57 799.24 L75.79 799.00 L76.18 797.21 L77.82 797.54 L77.48 799.34 L78.51 800.04 L80.06 799.05 L80.98 800.43 L79.46 801.47Z" fill="#a9dcf0" stroke="#1a7fa8" stroke-width="1.2" stroke-linejoin="round"/><circle cx="75.9" cy="802.8" r="2" fill="#fff" stroke="#1a7fa8" stroke-width="0.9"/>
<path d="M84.60 807.88 L86.49 808.31 L86.13 810.12 L84.21 809.78 L83.42 810.95 L84.46 812.60 L82.92 813.62 L81.81 812.03 L80.42 812.30 L79.99 814.19 L78.18 813.83 L78.52 811.91 L77.35 811.12 L75.70 812.16 L74.68 810.62 L76.27 809.51 L76.00 808.12 L74.11 807.69 L74.47 805.88 L76.39 806.22 L77.18 805.05 L76.14 803.40 L77.68 802.38 L78.79 803.97 L80.18 803.70 L80.61 801.81 L82.42 802.17 L82.08 804.09 L83.25 804.88 L84.90 803.84 L85.92 805.38 L84.33 806.49Z" fill="#c4e8f6" stroke="#1a7fa8" stroke-width="1.2" stroke-linejoin="round"/><circle cx="80.30000000000001" cy="808.0" r="2.4" fill="#fff" stroke="#1a7fa8" stroke-width="0.9"/></g>
<g><path d="M51.8 825 L60.6 818.6 M58.6 831.8 L65.6 822.6" stroke="#3d7f9f" stroke-width="1" fill="none"/>
<circle cx="54.8" cy="828.6" r="4.3" fill="#f4f4f4" stroke="#8c8c8c" stroke-width="1.3"/><circle cx="54.8" cy="828.6" r="1.9" fill="#fff" stroke="#9a9a9a" stroke-width="0.9"/>
<circle cx="62.4" cy="821.4" r="3" fill="#f4f4f4" stroke="#8c8c8c" stroke-width="1.2"/><circle cx="62.4" cy="821.4" r="1" fill="#fff" stroke="#9a9a9a" stroke-width="0.8"/></g>
<g transform="translate(30.4 835.2) scale(0.5) translate(-682.5 -0.5)" fill="none" stroke="#2fa3dd" stroke-width="2.6" stroke-linecap="round"><path d="M682.5 36.3 C691 37.2 698.5 35.5 702.5 28.5 C706 22 703.5 16 697.5 15.8 C691.5 15.6 688 20 689.5 24.5 C691 29 699 30 705.5 26 C712.5 21.5 715 13.5 710 9.5 C706.5 7 700.5 6.8 696 8"/></g>
<path d="M32.6 860.4 C36 859.4 41 859 44.6 860.6 C45.4 861 45 862 44 862.4" stroke="#2a86b5" stroke-width="1.2" fill="none"/>
</svg>


<!-- VIEWPORT -->
<svg class="abs" style="left:291px;top:108px" width="616" height="769" viewBox="291 108 616 769">
<defs>
<linearGradient id="bg" x1="0" y1="0" x2="0" y2="1">
<stop offset="0" stop-color="#6a9199"/><stop offset="1" stop-color="#aedbb9"/>
</linearGradient>
</defs>
<rect x="295" y="109" width="612" height="768" fill="url(#bg)"/>
<defs>
<linearGradient id="rg0" gradientUnits="userSpaceOnUse" x1="471.8" y1="426.0" x2="806.4" y2="568.0"><stop offset="0" stop-color="#636363"/><stop offset="0.135" stop-color="#535353"/><stop offset="0.27" stop-color="#4a4a4a"/><stop offset="0.5" stop-color="#404040"/><stop offset="1" stop-color="#2f2f2f"/></linearGradient>
<linearGradient id="rg1" gradientUnits="userSpaceOnUse" x1="475.9" y1="422.8" x2="802.3" y2="571.2"><stop offset="0" stop-color="#606060"/><stop offset="0.135" stop-color="#515151"/><stop offset="0.27" stop-color="#494949"/><stop offset="0.5" stop-color="#404040"/><stop offset="1" stop-color="#313131"/></linearGradient>
<linearGradient id="rg2" gradientUnits="userSpaceOnUse" x1="480.0" y1="419.7" x2="798.2" y2="574.3"><stop offset="0" stop-color="#5d5d5d"/><stop offset="0.135" stop-color="#505050"/><stop offset="0.27" stop-color="#484848"/><stop offset="0.5" stop-color="#404040"/><stop offset="1" stop-color="#333333"/></linearGradient>
<linearGradient id="rg3" gradientUnits="userSpaceOnUse" x1="484.0" y1="416.7" x2="794.2" y2="577.3"><stop offset="0" stop-color="#5a5a5a"/><stop offset="0.135" stop-color="#4e4e4e"/><stop offset="0.27" stop-color="#474747"/><stop offset="0.5" stop-color="#404040"/><stop offset="1" stop-color="#353535"/></linearGradient>
<linearGradient id="rg4" gradientUnits="userSpaceOnUse" x1="488.0" y1="413.8" x2="790.2" y2="580.2"><stop offset="0" stop-color="#575757"/><stop offset="0.135" stop-color="#4c4c4c"/><stop offset="0.27" stop-color="#464646"/><stop offset="0.5" stop-color="#414141"/><stop offset="1" stop-color="#383838"/></linearGradient>
<linearGradient id="rg5" gradientUnits="userSpaceOnUse" x1="492.0" y1="411.1" x2="786.2" y2="582.9"><stop offset="0" stop-color="#545454"/><stop offset="0.135" stop-color="#4b4b4b"/><stop offset="0.27" stop-color="#464646"/><stop offset="0.5" stop-color="#414141"/><stop offset="1" stop-color="#3a3a3a"/></linearGradient>
<linearGradient id="rg6" gradientUnits="userSpaceOnUse" x1="496.0" y1="408.4" x2="782.2" y2="585.6"><stop offset="0" stop-color="#515151"/><stop offset="0.135" stop-color="#494949"/><stop offset="0.27" stop-color="#454545"/><stop offset="0.5" stop-color="#414141"/><stop offset="1" stop-color="#3c3c3c"/></linearGradient>
<linearGradient id="rg7" gradientUnits="userSpaceOnUse" x1="499.9" y1="405.8" x2="778.3" y2="588.2"><stop offset="0" stop-color="#4e4e4e"/><stop offset="0.135" stop-color="#484848"/><stop offset="0.27" stop-color="#444444"/><stop offset="0.5" stop-color="#414141"/><stop offset="1" stop-color="#3e3e3e"/></linearGradient>
<linearGradient id="rg8" gradientUnits="userSpaceOnUse" x1="503.8" y1="403.4" x2="774.4" y2="590.6"><stop offset="0" stop-color="#4b4b4b"/><stop offset="0.135" stop-color="#464646"/><stop offset="0.27" stop-color="#434343"/><stop offset="0.5" stop-color="#414141"/><stop offset="1" stop-color="#404040"/></linearGradient>
<linearGradient id="rg9" gradientUnits="userSpaceOnUse" x1="507.6" y1="401.0" x2="770.6" y2="593.0"><stop offset="0" stop-color="#484848"/><stop offset="0.135" stop-color="#444444"/><stop offset="0.27" stop-color="#424242"/><stop offset="0.5" stop-color="#414141"/><stop offset="1" stop-color="#424242"/></linearGradient>
<linearGradient id="rg10" gradientUnits="userSpaceOnUse" x1="511.5" y1="398.7" x2="766.7" y2="595.3"><stop offset="0" stop-color="#454545"/><stop offset="0.135" stop-color="#434343"/><stop offset="0.27" stop-color="#414141"/><stop offset="0.5" stop-color="#424242"/><stop offset="1" stop-color="#454545"/></linearGradient>
<linearGradient id="rg11" gradientUnits="userSpaceOnUse" x1="515.3" y1="396.5" x2="762.9" y2="597.5"><stop offset="0" stop-color="#424242"/><stop offset="0.135" stop-color="#414141"/><stop offset="0.27" stop-color="#404040"/><stop offset="0.5" stop-color="#424242"/><stop offset="1" stop-color="#474747"/></linearGradient>
<linearGradient id="rg12" gradientUnits="userSpaceOnUse" x1="519.1" y1="394.4" x2="759.1" y2="599.6"><stop offset="0" stop-color="#3f3f3f"/><stop offset="0.135" stop-color="#3f3f3f"/><stop offset="0.27" stop-color="#3f3f3f"/><stop offset="0.5" stop-color="#424242"/><stop offset="1" stop-color="#494949"/></linearGradient>
<linearGradient id="rg13" gradientUnits="userSpaceOnUse" x1="522.9" y1="392.4" x2="755.3" y2="601.6"><stop offset="0" stop-color="#3d3d3d"/><stop offset="0.135" stop-color="#3e3e3e"/><stop offset="0.27" stop-color="#3e3e3e"/><stop offset="0.5" stop-color="#424242"/><stop offset="1" stop-color="#4b4b4b"/></linearGradient>
<linearGradient id="rg14" gradientUnits="userSpaceOnUse" x1="526.7" y1="390.5" x2="751.5" y2="603.5"><stop offset="0" stop-color="#3c3c3c"/><stop offset="0.135" stop-color="#3d3d3d"/><stop offset="0.27" stop-color="#3d3d3d"/><stop offset="0.5" stop-color="#414141"/><stop offset="1" stop-color="#4c4c4c"/></linearGradient>
<linearGradient id="rg15" gradientUnits="userSpaceOnUse" x1="530.5" y1="388.7" x2="747.7" y2="605.3"><stop offset="0" stop-color="#3b3b3b"/><stop offset="0.135" stop-color="#3b3b3b"/><stop offset="0.27" stop-color="#3c3c3c"/><stop offset="0.5" stop-color="#404040"/><stop offset="1" stop-color="#4e4e4e"/></linearGradient>
<linearGradient id="rg16" gradientUnits="userSpaceOnUse" x1="534.2" y1="387.0" x2="744.0" y2="607.0"><stop offset="0" stop-color="#393939"/><stop offset="0.135" stop-color="#3a3a3a"/><stop offset="0.27" stop-color="#3b3b3b"/><stop offset="0.5" stop-color="#3f3f3f"/><stop offset="1" stop-color="#505050"/></linearGradient>
<linearGradient id="rg17" gradientUnits="userSpaceOnUse" x1="538.0" y1="385.4" x2="740.2" y2="608.6"><stop offset="0" stop-color="#383838"/><stop offset="0.135" stop-color="#393939"/><stop offset="0.27" stop-color="#3a3a3a"/><stop offset="0.5" stop-color="#3f3f3f"/><stop offset="1" stop-color="#515151"/></linearGradient>
<linearGradient id="rg18" gradientUnits="userSpaceOnUse" x1="541.8" y1="383.9" x2="736.4" y2="610.1"><stop offset="0" stop-color="#373737"/><stop offset="0.135" stop-color="#383838"/><stop offset="0.27" stop-color="#393939"/><stop offset="0.5" stop-color="#3e3e3e"/><stop offset="1" stop-color="#535353"/></linearGradient>
<linearGradient id="rg19" gradientUnits="userSpaceOnUse" x1="545.6" y1="382.6" x2="732.6" y2="611.4"><stop offset="0" stop-color="#353535"/><stop offset="0.135" stop-color="#363636"/><stop offset="0.27" stop-color="#383838"/><stop offset="0.5" stop-color="#3d3d3d"/><stop offset="1" stop-color="#545454"/></linearGradient>
<linearGradient id="rg20" gradientUnits="userSpaceOnUse" x1="549.3" y1="381.3" x2="728.9" y2="612.7"><stop offset="0" stop-color="#343434"/><stop offset="0.135" stop-color="#353535"/><stop offset="0.27" stop-color="#373737"/><stop offset="0.5" stop-color="#3d3d3d"/><stop offset="1" stop-color="#565656"/></linearGradient>
<linearGradient id="rg21" gradientUnits="userSpaceOnUse" x1="553.1" y1="380.1" x2="725.1" y2="613.9"><stop offset="0" stop-color="#323232"/><stop offset="0.135" stop-color="#343434"/><stop offset="0.27" stop-color="#353535"/><stop offset="0.5" stop-color="#3c3c3c"/><stop offset="1" stop-color="#585858"/></linearGradient>
<linearGradient id="rg22" gradientUnits="userSpaceOnUse" x1="556.9" y1="379.1" x2="721.3" y2="614.9"><stop offset="0" stop-color="#313131"/><stop offset="0.135" stop-color="#333333"/><stop offset="0.27" stop-color="#343434"/><stop offset="0.5" stop-color="#3b3b3b"/><stop offset="1" stop-color="#595959"/></linearGradient>
<linearGradient id="rg23" gradientUnits="userSpaceOnUse" x1="560.7" y1="378.2" x2="717.5" y2="615.8"><stop offset="0" stop-color="#303030"/><stop offset="0.135" stop-color="#313131"/><stop offset="0.27" stop-color="#333333"/><stop offset="0.5" stop-color="#3a3a3a"/><stop offset="1" stop-color="#5b5b5b"/></linearGradient>
<linearGradient id="rg24" gradientUnits="userSpaceOnUse" x1="564.5" y1="377.4" x2="713.7" y2="616.6"><stop offset="0" stop-color="#2e2e2e"/><stop offset="0.135" stop-color="#303030"/><stop offset="0.27" stop-color="#323232"/><stop offset="0.5" stop-color="#3a3a3a"/><stop offset="1" stop-color="#5c5c5c"/></linearGradient>
<linearGradient id="rg25" gradientUnits="userSpaceOnUse" x1="568.3" y1="376.7" x2="709.9" y2="617.3"><stop offset="0" stop-color="#2d2d2d"/><stop offset="0.135" stop-color="#2f2f2f"/><stop offset="0.27" stop-color="#313131"/><stop offset="0.5" stop-color="#393939"/><stop offset="1" stop-color="#5e5e5e"/></linearGradient>
<linearGradient id="tread" gradientUnits="userSpaceOnUse" x1="440" y1="480" x2="700" y2="250">
<stop offset="0" stop-color="#7e7e7e"/><stop offset="0.4" stop-color="#868686"/><stop offset="0.86" stop-color="#6a6a6a"/><stop offset="1" stop-color="#565656"/></linearGradient>
<linearGradient id="treadB" gradientUnits="userSpaceOnUse" x1="430" y1="530" x2="500" y2="700">
<stop offset="0" stop-color="#464646" stop-opacity="0"/><stop offset="0.35" stop-color="#464646" stop-opacity="0.45"/><stop offset="0.62" stop-color="#454545" stop-opacity="0.85"/><stop offset="1" stop-color="#444" stop-opacity="1"/></linearGradient>
<linearGradient id="wall" gradientUnits="userSpaceOnUse" x1="700" y1="350" x2="700" y2="660">
<stop offset="0" stop-color="#3a3a3a"/><stop offset="0.16" stop-color="#666"/><stop offset="0.32" stop-color="#727272"/><stop offset="0.58" stop-color="#838383"/><stop offset="0.8" stop-color="#7e7e7e"/><stop offset="1" stop-color="#686868"/></linearGradient>
<clipPath id="cfi"><path d="M717.16 344.89 A170.12 125.31 -62.80 1 0 561.64 647.51 A170.12 125.31 -62.80 1 0 717.16 344.89Z"/></clipPath>
<clipPath id="cface"><path d="M751.64 278.03 A246.20 181.35 -62.80 1 0 526.56 715.97 A246.20 181.35 -62.80 1 0 751.64 278.03Z M717.16 344.89 A170.12 125.31 -62.80 1 0 561.64 647.51 A170.12 125.31 -62.80 1 0 717.16 344.89Z" clip-rule="evenodd"/></clipPath>
</defs>
<g clip-path="url(#cfi)">
<path d="M300 100H907V877H300Z M698.96 336.69 A170.12 125.31 -62.80 1 0 543.44 639.31 A170.12 125.31 -62.80 1 0 698.96 336.69Z" fill-rule="evenodd" fill="url(#wall)"/>
<path d="M698.96 336.69 A170.12 125.31 -62.80 1 0 543.44 639.31 A170.12 125.31 -62.80 1 0 698.96 336.69Z" fill="none" stroke="#4a4a4a" stroke-width="0.8"/>
<path d="M617.4 474.6 L611.7 320.0 L594.2 311.8 L599.9 466.4 Z" fill="#9a9d9f" stroke="#3f4041" stroke-width="0.8" stroke-linejoin="round"/>
<path d="M653.4 460.5 L790.0 359.1 L772.5 350.9 L635.9 452.3 Z" fill="#a9acae" stroke="#3f4041" stroke-width="0.8" stroke-linejoin="round"/>
<path d="M609.5 518.8 L550.9 680.0 L533.4 671.8 L592.0 510.6 Z" fill="#a9acae" stroke="#3f4041" stroke-width="0.8" stroke-linejoin="round"/>
<path d="M617.4 474.6 L480.0 495.0 L462.5 486.8 L599.9 466.4 Z" fill="#8e9193" stroke="#3f4041" stroke-width="0.8" stroke-linejoin="round"/>
<path d="M640.7 531.0 L745.0 616.7 L727.5 608.5 L623.2 522.8 Z" fill="#4a4b4c" stroke="#3f4041" stroke-width="0.8" stroke-linejoin="round"/>
<path d="M617.4 474.6 L611.7 320.0 L631.2 320.0 L653.4 460.5 L790.0 359.1 L795.0 380.2 L669.6 494.5 L760.0 598.5 L745.0 616.7 L640.7 531.0 L572.0 680.0 L550.9 680.0 L609.5 518.8 L480.0 515.6 L480.0 495.0 Z" fill="#656668" stroke="#3f4041" stroke-width="0.8" stroke-linejoin="round"/>
</g>
<path d="M733.84 268.53 A246.20 181.35 -62.80 1 0 508.76 706.47 A246.20 181.35 -62.80 1 0 733.84 268.53Z M717.16 344.89 A170.12 125.31 -62.80 1 0 561.64 647.51 A170.12 125.31 -62.80 1 0 717.16 344.89Z" fill-rule="evenodd" fill="url(#tread)" stroke="#383838" stroke-width="1"/>
<path d="M733.84 268.53 A246.20 181.35 -62.80 1 0 508.76 706.47 A246.20 181.35 -62.80 1 0 733.84 268.53Z M717.16 344.89 A170.12 125.31 -62.80 1 0 561.64 647.51 A170.12 125.31 -62.80 1 0 717.16 344.89Z" fill-rule="evenodd" fill="url(#treadB)"/>
<g clip-path="url(#cface)">
<path d="M752.32 276.69 A247.70 182.46 -62.80 1 0 525.88 717.31 A247.70 182.46 -62.80 1 0 752.32 276.69Z" fill="url(#rg0)"/>
<path d="M750.25 280.73 A243.16 179.11 -62.80 1 0 527.95 713.27 A243.16 179.11 -62.80 1 0 750.25 280.73Z" fill="url(#rg1)"/>
<path d="M748.86 283.44 A240.11 176.87 -62.80 1 0 529.34 710.56 A240.11 176.87 -62.80 1 0 748.86 283.44Z" fill="url(#rg2)"/>
<path d="M747.46 286.15 A237.07 174.63 -62.80 1 0 530.74 707.85 A237.07 174.63 -62.80 1 0 747.46 286.15Z" fill="url(#rg3)"/>
<path d="M746.07 288.85 A234.03 172.38 -62.80 1 0 532.13 705.15 A234.03 172.38 -62.80 1 0 746.07 288.85Z" fill="url(#rg4)"/>
<path d="M744.68 291.56 A230.98 170.14 -62.80 1 0 533.52 702.44 A230.98 170.14 -62.80 1 0 744.68 291.56Z" fill="url(#rg5)"/>
<path d="M743.29 294.26 A227.94 167.90 -62.80 1 0 534.91 699.74 A227.94 167.90 -62.80 1 0 743.29 294.26Z" fill="url(#rg6)"/>
<path d="M741.90 296.97 A224.90 165.66 -62.80 1 0 536.30 697.03 A224.90 165.66 -62.80 1 0 741.90 296.97Z" fill="url(#rg7)"/>
<path d="M740.51 299.68 A221.86 163.42 -62.80 1 0 537.69 694.32 A221.86 163.42 -62.80 1 0 740.51 299.68Z" fill="url(#rg8)"/>
<path d="M739.12 302.38 A218.81 161.18 -62.80 1 0 539.08 691.62 A218.81 161.18 -62.80 1 0 739.12 302.38Z" fill="url(#rg9)"/>
<path d="M737.73 305.09 A215.77 158.94 -62.80 1 0 540.47 688.91 A215.77 158.94 -62.80 1 0 737.73 305.09Z" fill="url(#rg10)"/>
<path d="M736.34 307.80 A212.73 156.69 -62.80 1 0 541.86 686.20 A212.73 156.69 -62.80 1 0 736.34 307.80Z" fill="url(#rg11)"/>
<path d="M734.95 310.50 A209.68 154.45 -62.80 1 0 543.25 683.50 A209.68 154.45 -62.80 1 0 734.95 310.50Z" fill="url(#rg12)"/>
<path d="M733.55 313.21 A206.64 152.21 -62.80 1 0 544.65 680.79 A206.64 152.21 -62.80 1 0 733.55 313.21Z" fill="url(#rg13)"/>
<path d="M732.16 315.92 A203.60 149.97 -62.80 1 0 546.04 678.08 A203.60 149.97 -62.80 1 0 732.16 315.92Z" fill="url(#rg14)"/>
<path d="M730.77 318.62 A200.55 147.73 -62.80 1 0 547.43 675.38 A200.55 147.73 -62.80 1 0 730.77 318.62Z" fill="url(#rg15)"/>
<path d="M729.38 321.33 A197.51 145.49 -62.80 1 0 548.82 672.67 A197.51 145.49 -62.80 1 0 729.38 321.33Z" fill="url(#rg16)"/>
<path d="M727.99 324.04 A194.47 143.25 -62.80 1 0 550.21 669.96 A194.47 143.25 -62.80 1 0 727.99 324.04Z" fill="url(#rg17)"/>
<path d="M726.60 326.74 A191.43 141.00 -62.80 1 0 551.60 667.26 A191.43 141.00 -62.80 1 0 726.60 326.74Z" fill="url(#rg18)"/>
<path d="M725.21 329.45 A188.38 138.76 -62.80 1 0 552.99 664.55 A188.38 138.76 -62.80 1 0 725.21 329.45Z" fill="url(#rg19)"/>
<path d="M723.82 332.16 A185.34 136.52 -62.80 1 0 554.38 661.84 A185.34 136.52 -62.80 1 0 723.82 332.16Z" fill="url(#rg20)"/>
<path d="M722.43 334.86 A182.30 134.28 -62.80 1 0 555.77 659.14 A182.30 134.28 -62.80 1 0 722.43 334.86Z" fill="url(#rg21)"/>
<path d="M721.04 337.57 A179.25 132.04 -62.80 1 0 557.16 656.43 A179.25 132.04 -62.80 1 0 721.04 337.57Z" fill="url(#rg22)"/>
<path d="M719.65 340.28 A176.21 129.80 -62.80 1 0 558.55 653.72 A176.21 129.80 -62.80 1 0 719.65 340.28Z" fill="url(#rg23)"/>
<path d="M718.25 342.98 A173.17 127.55 -62.80 1 0 559.95 651.02 A173.17 127.55 -62.80 1 0 718.25 342.98Z" fill="url(#rg24)"/>
<path d="M716.86 345.69 A170.12 125.31 -62.80 1 0 561.34 648.31 A170.12 125.31 -62.80 1 0 716.86 345.69Z" fill="url(#rg25)"/>
</g>
<path d="M751.64 278.03 A246.20 181.35 -62.80 1 0 526.56 715.97 A246.20 181.35 -62.80 1 0 751.64 278.03Z" fill="none" stroke="#353535" stroke-width="0.9" stroke-opacity="0.85"/>
<path d="M717.16 344.89 A170.12 125.31 -62.80 1 0 561.64 647.51 A170.12 125.31 -62.80 1 0 717.16 344.89Z" fill="none" stroke="#2c2c2c" stroke-width="0.8"/>
<!--GIZMO-->
<g fill="none" stroke-linejoin="round" stroke-linecap="round">
<path d="M622.5 462.8 L629.1 459.7 L633.2 469.5 L635.3 470.0 L643.0 460.3 L649.1 463.9 L644.5 475.7 L645.6 477.7 L655.8 475.7 L656.8 483.4 L646.6 492.6 L653.2 500.8 L649.1 508.5 L639.9 505.4 L637.9 507.5 L635.8 520.3 L629.6 523.4 L626.1 513.6 L624.0 512.6 L615.8 522.9 L610.1 519.3 L614.8 507.5 L612.7 505.4 L603.5 507.5 L601.9 499.8 L612.7 490.5 L606.0 482.8 L610.1 475.1 L618.9 477.7 L621.4 475.7Z" stroke="#229a68" stroke-width="1.15"/>
<ellipse cx="629.8" cy="491.9" rx="6.8" ry="8.8" transform="rotate(18 629.8 491.9)" stroke="#229a68" stroke-width="1.1"/>
<path d="M629.6 491.6 L630.7 501.3" stroke="#229a68" stroke-width="1.1"/>
<path d="M631.7 511.6 L655.2 702" stroke="#229a68" stroke-width="1.1" stroke-dasharray="10 9.4" stroke-linecap="butt"/>
<path d="M629.6 491.6 L590.3 471.7" stroke="#22b440" stroke-width="1.3"/>
<path d="M593.2 482.6 L590.3 471.7 L597.1 475.9" stroke="#22b440" stroke-width="1.3"/>
<path d="M594.7 473.8 C598.3 463.3 611.2 463.3 614.6 472.0" stroke="#22b440" stroke-width="1.2"/>
<circle cx="614.5" cy="472.0" r="1.2" fill="#22b440" stroke="none"/>
<path d="M622.4 605.2 H627.6 L631.4 594 H636.8 L640.8 605.2 H645.8 L648.8 594 H654.2 L657.4 605.2 H662.2" stroke="#229a68" stroke-width="1.1"/>
<path d="M650.2 670.7 L651.5 678.8 L654.0 679.4 L656.5 691.4 L664.6 690.1 L669.6 697.6 L666.5 703.9 L671.5 711.4 L675.3 713.9 L676.5 722.1 L668.4 721.5 L673.4 734.6 L670.3 738.4 L662.1 729.6 L661.5 739.0 L655.2 735.9 L652.7 724.0 L643.9 724.6 L640.2 717.7 L642.7 711.4 L638.3 703.9 L633.9 693.9 L640.2 693.2 L635.8 681.3 L639.5 676.9 L647.1 687.0 L648.3 676.9Z" stroke="#229a68" stroke-width="1"/>
<ellipse cx="654.6" cy="708.3" rx="3" ry="7.6" transform="rotate(-14 654.6 708.3)" stroke="#229a68" stroke-width="1.1"/>
<path d="M639.5 699.5 L654.0 691.6 L669.0 697.6 L654.6 705.8Z M641.4 717.7 L655.8 710.2 L670.9 716.4 L655.2 724.0Z M639.5 699.5 L641.4 717.7 M654.0 691.6 L655.8 710.2 M669.0 697.6 L670.9 716.4 M654.6 705.8 L655.2 724.0" stroke="#2dc043" stroke-width="1.1"/>
<path d="M654.6 708.3 L603.8 730.9" stroke="#22b440" stroke-width="1.3"/>
<path d="M613.8 723.3 L603.8 730.9 L616.3 730.2" stroke="#22b440" stroke-width="1.3"/>
</g>
<text x="306" y="783" font-family="Liberation Sans, sans-serif" font-size="15.4" fill="#b5a9b5" fill-opacity="0.7" textLength="190" lengthAdjust="spacing">Simp Rep:DEFAULT REP(+)</text>

</svg>

</body></html>
